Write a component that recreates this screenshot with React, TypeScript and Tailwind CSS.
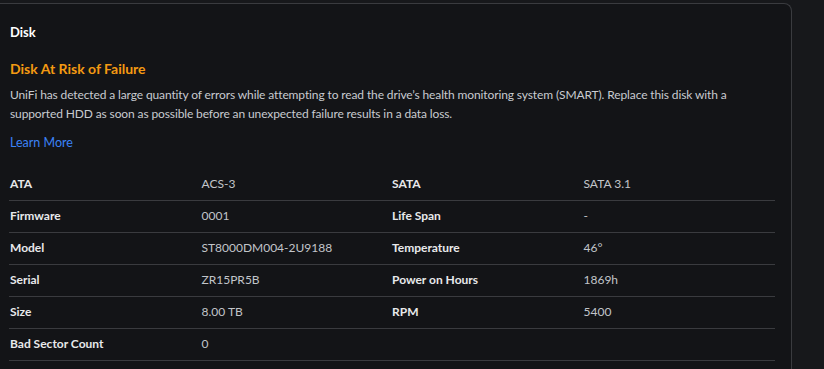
const rows: [string, string, string, string][] = [
  ["ATA", "ACS-3", "SATA", "SATA 3.1"],
  ["Firmware", "0001", "Life Span", "-"],
  ["Model", "ST8000DM004-2U9188", "Temperature", "46°"],
  ["Serial", "ZR15PR5B", "Power on Hours", "1869h"],
  ["Size", "8.00 TB", "RPM", "5400"],
  ["Bad Sector Count", "0", "", ""],
]

export default function App() {
  return (
    <div className="min-h-[369px] bg-[#17181b] pt-[3px]" style={{ fontFamily: "Lato, 'Noto Sans', sans-serif" }}>
      <div className="w-[792px] min-h-[366px] rounded-tr-lg border-t border-r border-[#3a3b3f] bg-[#131417] pl-[9px] pr-[16px] pt-[19px]">
        <h2 className="pl-px text-[13px] font-bold leading-[18px] text-white">Disk</h2>
        <h3 className="mt-[19px] pl-px text-[14px] font-bold leading-[18px] text-[#f39a12]">Disk At Risk of Failure</h3>
        <p className="mt-[7px] pl-px text-[12px] leading-[19px] tracking-[-0.12px] text-[#c8cbd0]">
          UniFi has detected a large quantity of errors while attempting to read the drive’s health monitoring system
          (SMART). Replace this disk with a supported HDD as soon as possible before an unexpected failure results in a
          data loss.
        </p>
        <a className="mt-[11px] block pl-px text-[12.5px] leading-[18px] text-[#3b82f6]">Learn More</a>
        <div className="mt-[17px]">
          {rows.map((r) => (
            <div key={r[0]} className="grid h-[32px] grid-cols-4 items-center border-b border-[#3a3b3f] pb-[1px] text-[12px]">
              <div className="pl-px font-bold text-[#e8e9eb]">{r[0]}</div>
              <div className="pl-px text-[#c2c5ca]">{r[1]}</div>
              <div className="font-bold text-[#e8e9eb]">{r[2]}</div>
              <div className="text-[#c2c5ca]">{r[3]}</div>
            </div>
          ))}
        </div>
      </div>
    </div>
  )
}
